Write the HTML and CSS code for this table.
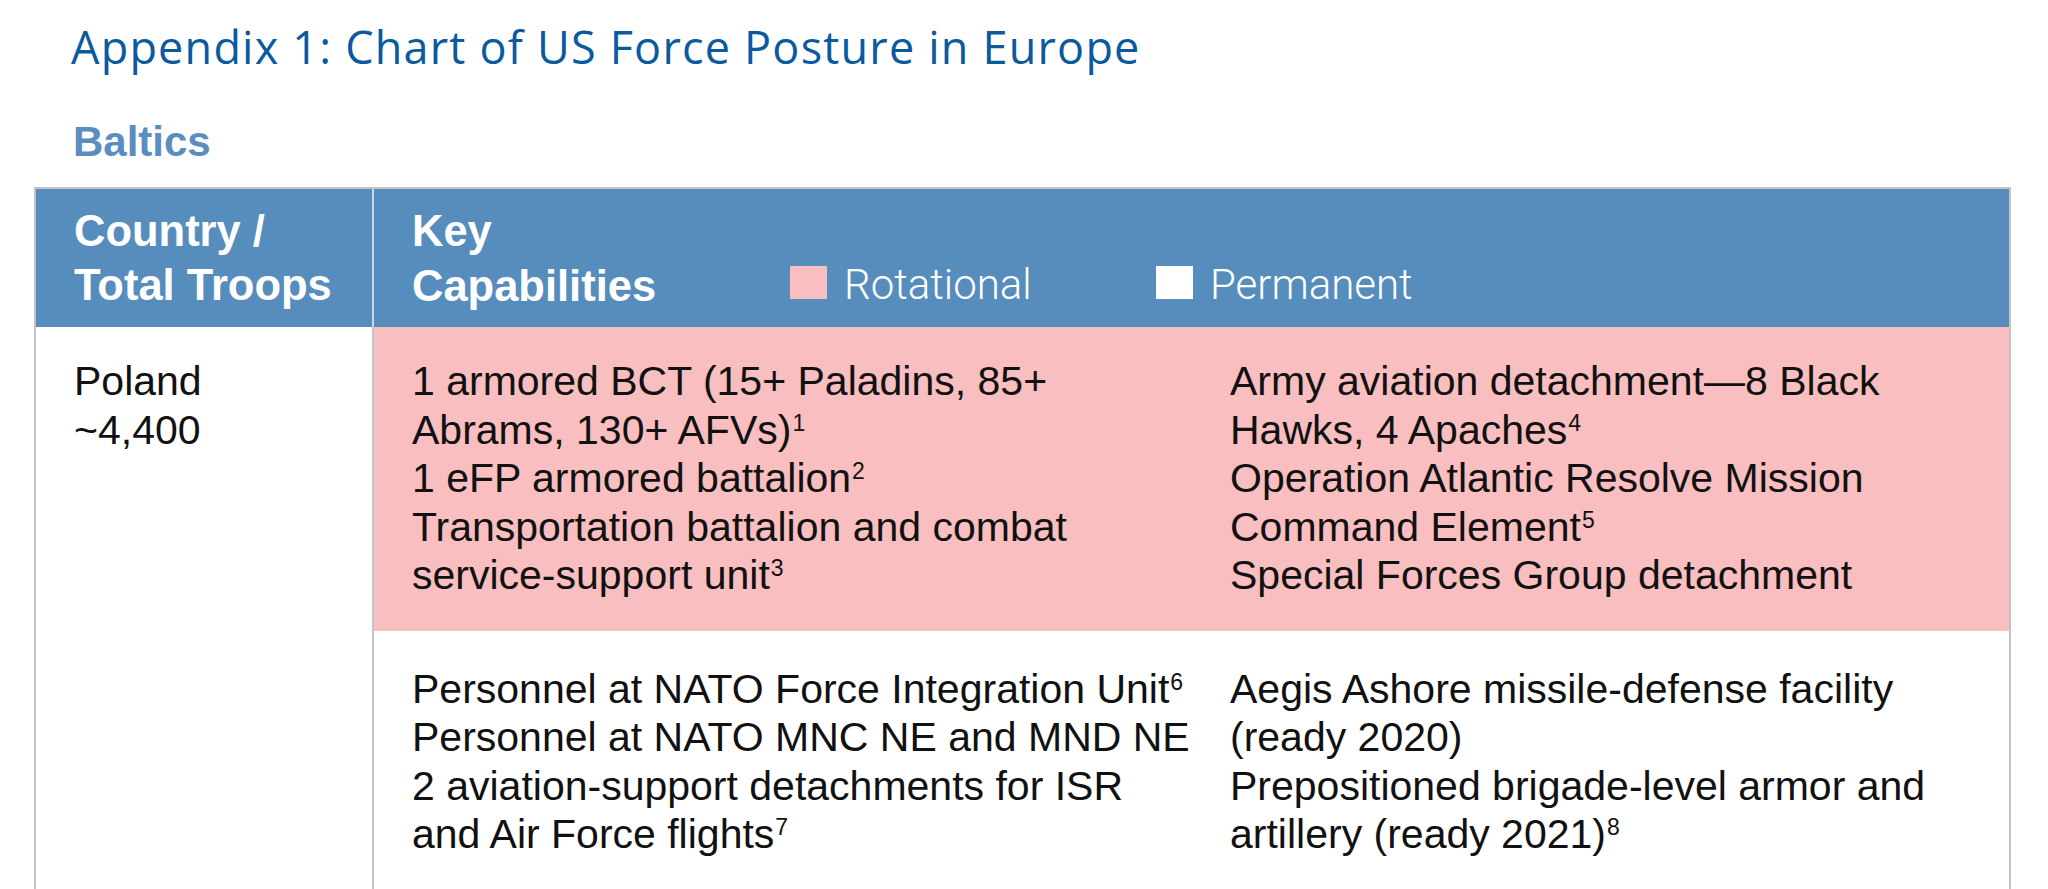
FILE: index.html
```html
<!DOCTYPE html>
<html lang="en">
<head>
<meta charset="utf-8">
<title>Appendix 1: Chart of US Force Posture in Europe</title>
<link rel="stylesheet" href="styles.css">
</head>
<body>
<div class="page">
  <h1 class="title">Appendix 1: Chart of US Force Posture in Europe</h1>
  <h2 class="region">Baltics</h2>
  <div class="chart">
    <div class="hcell hcountry">Country /<br>Total Troops</div>
    <div class="hcell hcap">
      <div class="hline">Key</div>
      <div class="hline"><span class="capword">Capabilities</span><span class="legend"><span class="sw sw-rot"></span><span class="lt lt-rot">Rotational</span><span class="sw sw-perm"></span><span class="lt">Permanent</span></span></div>
    </div>
    <div class="country">Poland<br>~4,400</div>
    <div class="band rot">
      <div class="col col-a">1 armored BCT (15+ Paladins, 85+<br>Abrams, 130+ AFVs)<sup>1</sup><br>1 eFP armored battalion<sup>2</sup><br>Transportation battalion and combat<br>service-support unit<sup>3</sup></div>
      <div class="col col-b">Army aviation detachment—8 Black<br>Hawks, 4 Apaches<sup>4</sup><br>Operation Atlantic Resolve Mission<br>Command Element<sup>5</sup><br>Special Forces Group detachment</div>
    </div>
    <div class="band perm">
      <div class="col col-a">Personnel at NATO Force Integration Unit<sup>6</sup><br>Personnel at NATO MNC NE and MND NE<br>2 aviation-support detachments for ISR<br>and Air Force flights<sup>7</sup></div>
      <div class="col col-b">Aegis Ashore missile-defense facility<br>(ready 2020)<br>Prepositioned brigade-level armor and<br>artillery (ready 2021)<sup>8</sup></div>
    </div>
  </div>
</div>
</body>
</html>
```

FILE: styles.css
```css
html, body {
  margin: 0;
  padding: 0;
  background: #ffffff;
  overflow: hidden;
}

.page {
  width: 2048px;
  height: 889px;
  overflow: hidden;
  display: flex;
  flex-direction: column;
  align-items: flex-start;
}

.title {
  margin: 0;
  padding: 24px 0 0 71px;
  font-family: "Open Sans", "Lato", sans-serif;
  font-weight: 400;
  font-size: 45px;
  line-height: 45px;
  letter-spacing: 1.2px;
  color: #0b5a9e;
}

.region {
  margin: 52px 0 0 73px;
  font-family: "Liberation Sans", Arial, sans-serif;
  font-weight: 700;
  font-size: 42px;
  line-height: 42px;
  color: #5a8ec0;
}

.chart {
  box-sizing: border-box;
  margin: 24px 0 0 34px;
  width: 1977px;
  display: grid;
  grid-template-columns: 338px 1fr;
  border: 2px solid #c3c3c3;
  border-bottom: none;
  font-family: "Liberation Sans", Arial, sans-serif;
  color: #111111;
}

.hcell {
  background: #568dbd;
  color: #ffffff;
  font-weight: 700;
  font-size: 43.5px;
  line-height: 54px;
  padding: 15px 0 14px 38px;
}

.hcountry {
  border-right: 2px solid #c9d8e7;
}

.capword {
  display: inline-block;
  width: 378px;
}

.legend {
  display: inline-block;
  vertical-align: 2px;
  font-family: "Roboto", "Liberation Sans", sans-serif;
  font-weight: 300;
  font-size: 42px;
}

.sw {
  display: inline-block;
  width: 37px;
  height: 33px;
  margin-right: 17px;
}

.sw-rot {
  background: #f8bec0;
}

.sw-perm {
  background: #ffffff;
}

.lt-rot {
  display: inline-block;
  width: 312px;
}

.country {
  grid-row: 2 / span 2;
  border-right: 2px solid #c3c3c3;
  background: #ffffff;
  font-size: 41px;
  line-height: 48.5px;
  padding: 30px 0 0 38px;
}

.band {
  display: grid;
  grid-template-columns: 818px 1fr;
  padding-left: 38px;
  font-size: 41px;
  line-height: 48.5px;
  white-space: nowrap;
}

.rot {
  background: #f8bec0;
  padding-top: 30px;
  padding-bottom: 31px;
}

.perm {
  background: #ffffff;
  padding-top: 34px;
  padding-bottom: 60px;
}

sup {
  font-size: 23px;
  line-height: 0;
  vertical-align: 13px;
  margin-left: 1px;
}
```
